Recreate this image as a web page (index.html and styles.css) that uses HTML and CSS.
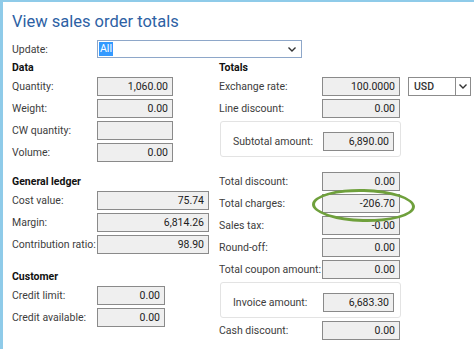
FILE: index.html
```html
<!DOCTYPE html>
<html lang="en">
<head>
    <meta charset="UTF-8">
    <title>View sales order totals</title>
    <link rel="stylesheet" href="styles.css">
</head>
<body>
    <div class="window">
        <h1 class="title">View sales order totals</h1>

        <div class="update-row">
            <span class="label">Update:</span>
            <div class="combo combo-wide">
                <span class="combo-text"><span class="selected">All</span></span>
                <svg class="chevron" width="8" height="5" viewBox="0 0 8 5"><polyline points="0.5,0.5 4,4 7.5,0.5" fill="none" stroke="#333" stroke-width="1.4"/></svg>
            </div>
        </div>

        <div class="columns">
            <div class="col col-left">
                <div class="section">
                    <div class="head">Data</div>
                    <div class="row"><span class="label">Quantity:</span><span class="field w76">1,060.00</span></div>
                    <div class="row"><span class="label">Weight:</span><span class="field w76">0.00</span></div>
                    <div class="row"><span class="label">CW quantity:</span><span class="field w76"></span></div>
                    <div class="row"><span class="label">Volume:</span><span class="field w76">0.00</span></div>
                </div>
                <div class="section section-ledger">
                    <div class="head">General ledger</div>
                    <div class="row"><span class="label">Cost value:</span><span class="field w112">75.74</span></div>
                    <div class="row"><span class="label">Margin:</span><span class="field w112">6,814.26</span></div>
                    <div class="row"><span class="label">Contribution ratio:</span><span class="field w112">98.90</span></div>
                </div>
                <div class="section section-customer">
                    <div class="head">Customer</div>
                    <div class="row"><span class="label">Credit limit:</span><span class="field w68">0.00</span></div>
                    <div class="row"><span class="label">Credit available:</span><span class="field w68">0.00</span></div>
                </div>
            </div>

            <div class="col col-right">
                <div class="section">
                    <div class="head">Totals</div>
                    <div class="row">
                        <span class="label label-wide">Exchange rate:</span><span class="field w78">100.0000</span>
                        <div class="combo combo-currency">
                            <span class="combo-text">USD</span>
                            <span class="combo-btn">
                                <svg width="8" height="5" viewBox="0 0 8 5"><polyline points="0.5,0.5 4,4 7.5,0.5" fill="none" stroke="#333" stroke-width="1.4"/></svg>
                            </span>
                        </div>
                    </div>
                    <div class="row"><span class="label label-wide">Line discount:</span><span class="field w78">0.00</span></div>
                    <div class="group">
                        <span class="label label-group">Subtotal amount:</span><span class="field w71">6,890.00</span>
                    </div>
                </div>
                <div class="section section-totals">
                    <div class="row"><span class="label label-wide">Total discount:</span><span class="field w78">0.00</span></div>
                    <div class="row row-marked">
                        <span class="label label-wide">Total charges:</span><span class="field w78">-206.70</span>
                        <span class="mark"></span>
                    </div>
                    <div class="row"><span class="label label-wide">Sales tax:</span><span class="field w78">-0.00</span></div>
                    <div class="row"><span class="label label-wide">Round-off:</span><span class="field w78">0.00</span></div>
                    <div class="row"><span class="label label-wide">Total coupon amount:</span><span class="field w78">0.00</span></div>
                    <div class="group group-invoice">
                        <span class="label label-group">Invoice amount:</span><span class="field w71">6,683.30</span>
                    </div>
                    <div class="row"><span class="label label-wide">Cash discount:</span><span class="field w78">0.00</span></div>
                </div>
            </div>
        </div>
    </div>
</body>
</html>
```

FILE: styles.css
```css
body {
    margin: 0;
    font-family: 'Roboto', 'Noto Sans', sans-serif;
    font-size: 10.5px;
    color: #3d3d3d;
    background: #fff;
}

.window {
    height: 349px;
    border-top: 2px solid #8fcbe9;
    border-left: 3px solid #8fcbe9;
    padding-left: 9px;
    box-sizing: border-box;
    overflow: hidden;
}

.title {
    margin: 9px 0 0 0;
    font-size: 16.5px;
    line-height: 22px;
    font-weight: normal;
    color: #2d61a4;
}

/* строка Update */
.update-row {
    display: flex;
    align-items: center;
    height: 18px;
    margin-top: 7px;
    margin-bottom: 3px;
}

.label {
    width: 85px;
    flex-shrink: 0;
    white-space: nowrap;
}

.label-wide {
    width: 103px;
}

.label-group {
    width: 90px;
}

.combo {
    display: flex;
    align-items: center;
    height: 18px;
    box-sizing: border-box;
    background: #fff;
}

.combo-wide {
    width: 205px;
    border: 1px solid #8ea7c9;
    padding: 0 5px 0 1px;
    justify-content: space-between;
}

.selected {
    display: inline-block;
    line-height: 14px;
    background: #3399ff;
    color: #fff;
    padding: 0 1px;
}

.combo-text {
    color: #222;
}

.combo-currency {
    width: 63px;
    height: 19px;
    margin-left: 8px;
    border: 1px solid #8c8c8c;
    padding-left: 5px;
    justify-content: space-between;
}

.combo-currency .combo-text {
    font-weight: 500;
    color: #333;
}

.combo-btn {
    width: 14px;
    height: 100%;
    border-left: 1px solid #8c8c8c;
    display: flex;
    align-items: center;
    justify-content: center;
}

/* колонки */
.columns {
    display: flex;
}

.col-left {
    width: 207px;
    flex-shrink: 0;
}

.col-right {
    flex: 1;
}

.head {
    height: 14px;
    line-height: 14px;
    margin-bottom: 2px;
    font-weight: bold;
    color: #111;
}

.section-ledger {
    margin-top: 13px;
}

.section-customer {
    margin-top: 16px;
}

.section-totals {
    margin-top: 15px;
}

.row {
    display: flex;
    align-items: center;
    height: 19px;
    margin-bottom: 3px;
}

.field {
    height: 19px;
    line-height: 17px;
    box-sizing: border-box;
    border: 1px solid #8a8a8a;
    background: #efefef;
    text-align: right;
    padding-right: 4px;
    color: #1c1c1c;
}

.w68 { width: 68px; }
.w71 { width: 71px; }
.w76 { width: 76px; }
.w78 { width: 78px; }
.w112 { width: 112px; }

.group {
    display: flex;
    align-items: center;
    width: 181px;
    height: 36px;
    box-sizing: border-box;
    margin: 1px 0 0 1px;
    padding: 5px 0 0 12px;
    border: 1px solid #e3e3e3;
    border-radius: 3px;
}

.group-invoice {
    margin: 3px 0 3px 1px;
}

/* зелёный овал вокруг Total charges */
.row-marked {
    position: relative;
}

.mark {
    position: absolute;
    left: 93px;
    top: -5px;
    width: 103px;
    height: 33px;
    box-sizing: border-box;
    border: 3px solid #6fa03c;
    border-radius: 50%;
    transform: rotate(1.5deg);
}
```
